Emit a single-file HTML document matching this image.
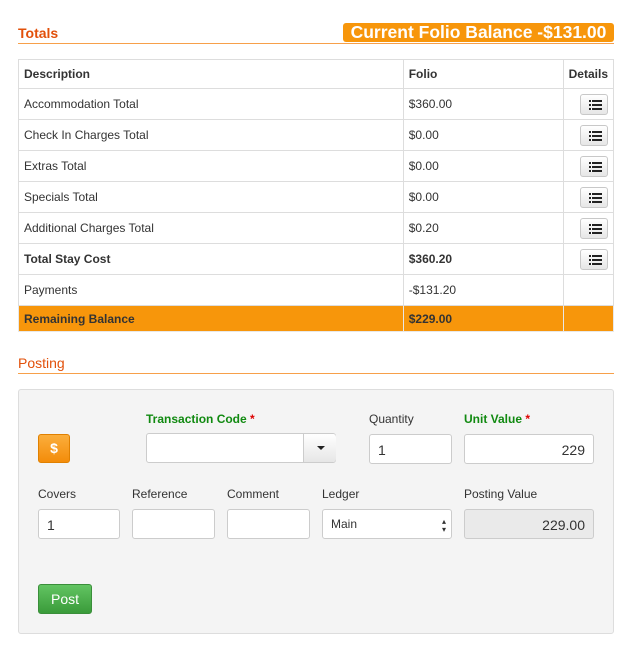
<!DOCTYPE html><html><head><style>
body{margin:0;width:624px;height:661px;background:#fff;font-family:"Liberation Sans",sans-serif;font-size:12px;color:#333;position:relative;overflow:hidden}
.a{position:absolute}
.h{color:#e2500a;font-size:14px;font-weight:bold}
table{position:absolute;left:18px;top:59px;width:596px;border-collapse:collapse;border:1px solid #ddd}
td{border:1px solid #ddd;padding:0 5px;height:30px;font-size:12px}
tr.hd td{font-weight:bold;height:28px}
tr.b td{font-weight:bold}
tr.o td{background:#f7960b;font-weight:bold;height:25px;border-color:#e8e8e8}
.btn{width:26px;height:19px;border:1px solid #c8c8c8;border-radius:3px;background:linear-gradient(#fff,#e6e6e6);margin-left:11px;position:relative}
.btn i{position:absolute;left:8px;width:11px;height:2px;background:#222;border-left:2px solid #222;box-shadow:inset 1px 0 #fff}
.lbl{font-size:12px;color:#333}
.g{color:#118a11;font-weight:bold}
.in{position:absolute;height:28px;border:1px solid #ccc;border-radius:3px;background:#fff;box-sizing:border-box;font-size:14px;line-height:28px;padding:0 8px}
</style></head><body>
<div class="a h" style="left:18px;top:25px">Totals</div>
<div class="a" style="left:343px;top:23px;width:271px;height:19px;background:#f7960b;border-radius:3px;color:#fff;font-weight:bold;font-size:17.5px;line-height:19px;text-align:center">Current Folio Balance -$131.00</div>
<svg class="a" style="left:18px;top:43px" width="596" height="1"><rect width="596" height="1" fill="#f7a04a"/></svg>
<table>
<tr class="hd"><td style="width:374px">Description</td><td style="width:149px">Folio</td><td style="padding:0 5px">Details</td></tr>
<tr><td>Accommodation Total</td><td>$360.00</td><td><div class="btn"><i style="top:5px"></i><i style="top:9px"></i><i style="top:13px"></i></div></td></tr>
<tr><td>Check In Charges Total</td><td>$0.00</td><td><div class="btn"><i style="top:5px"></i><i style="top:9px"></i><i style="top:13px"></i></div></td></tr>
<tr><td>Extras Total</td><td>$0.00</td><td><div class="btn"><i style="top:5px"></i><i style="top:9px"></i><i style="top:13px"></i></div></td></tr>
<tr><td>Specials Total</td><td>$0.00</td><td><div class="btn"><i style="top:5px"></i><i style="top:9px"></i><i style="top:13px"></i></div></td></tr>
<tr><td>Additional Charges Total</td><td>$0.20</td><td><div class="btn"><i style="top:5px"></i><i style="top:9px"></i><i style="top:13px"></i></div></td></tr>
<tr class="b"><td>Total Stay Cost</td><td>$360.20</td><td><div class="btn"><i style="top:5px"></i><i style="top:9px"></i><i style="top:13px"></i></div></td></tr>
<tr><td>Payments</td><td>-$131.20</td><td></td></tr>
<tr class="o"><td>Remaining Balance</td><td>$229.00</td><td></td></tr>
</table>
<div class="a h" style="left:18px;top:355px;font-weight:normal;font-size:14px">Posting</div>
<svg class="a" style="left:18px;top:373px" width="596" height="1"><rect width="596" height="1" fill="#f7a04a"/></svg>
<div class="a" style="left:18px;top:389px;width:594px;height:243px;background:#f4f4f4;border:1px solid #ddd;border-radius:3px"></div>
<div class="a" style="left:38px;top:434px;width:32px;height:29px;background:linear-gradient(#fbae3c,#f38c0a);border:1px solid #e08000;border-radius:3px;color:#fff;font-weight:bold;font-size:14px;text-align:center;line-height:27px;box-sizing:border-box">$</div>
<div class="a lbl g" style="left:146px;top:412px">Transaction Code <span style="color:#d00">*</span></div>
<div class="in" style="left:146px;top:433px;width:190px;height:30px"></div>
<div class="a" style="left:303px;top:434px;width:32px;height:28px;background:linear-gradient(#fff,#e6e6e6);border-left:1px solid #ccc;border-radius:0 3px 3px 0"><div style="position:absolute;left:13px;top:12px;border:4px solid transparent;border-top:4px solid #222;border-bottom:0"></div></div>
<div class="a lbl" style="left:369px;top:412px">Quantity</div>
<div class="in" style="left:369px;top:434px;width:83px;height:30px;line-height:30px">1</div>
<div class="a lbl g" style="left:464px;top:412px">Unit Value <span style="color:#d00">*</span></div>
<div class="in" style="left:464px;top:434px;width:130px;height:30px;line-height:30px;text-align:right">229</div>
<div class="a lbl" style="left:38px;top:487px">Covers</div>
<div class="a lbl" style="left:132px;top:487px">Reference</div>
<div class="a lbl" style="left:227px;top:487px">Comment</div>
<div class="a lbl" style="left:322px;top:487px">Ledger</div>
<div class="a lbl" style="left:464px;top:487px">Posting Value</div>
<div class="in" style="left:38px;top:509px;width:82px;height:30px;line-height:30px">1</div>
<div class="in" style="left:132px;top:509px;width:83px;height:30px"></div>
<div class="in" style="left:227px;top:509px;width:83px;height:30px"></div>
<div class="in" style="left:322px;top:509px;width:130px;height:30px;line-height:28px;font-size:12px">Main<span style="position:absolute;right:5px;font-size:8px;line-height:8px;top:8px">▴<br>▾</span></div>
<div class="in" style="left:464px;top:509px;width:130px;height:30px;line-height:30px;text-align:right;background:#eaeaea">229.00</div>
<div class="a" style="left:38px;top:584px;width:54px;height:30px;background:linear-gradient(#62c462,#3a9b3a);border:1px solid #3a8e3a;border-radius:3px;color:#fff;font-size:14px;text-align:center;line-height:28px;box-sizing:border-box">Post</div>
</body></html>
